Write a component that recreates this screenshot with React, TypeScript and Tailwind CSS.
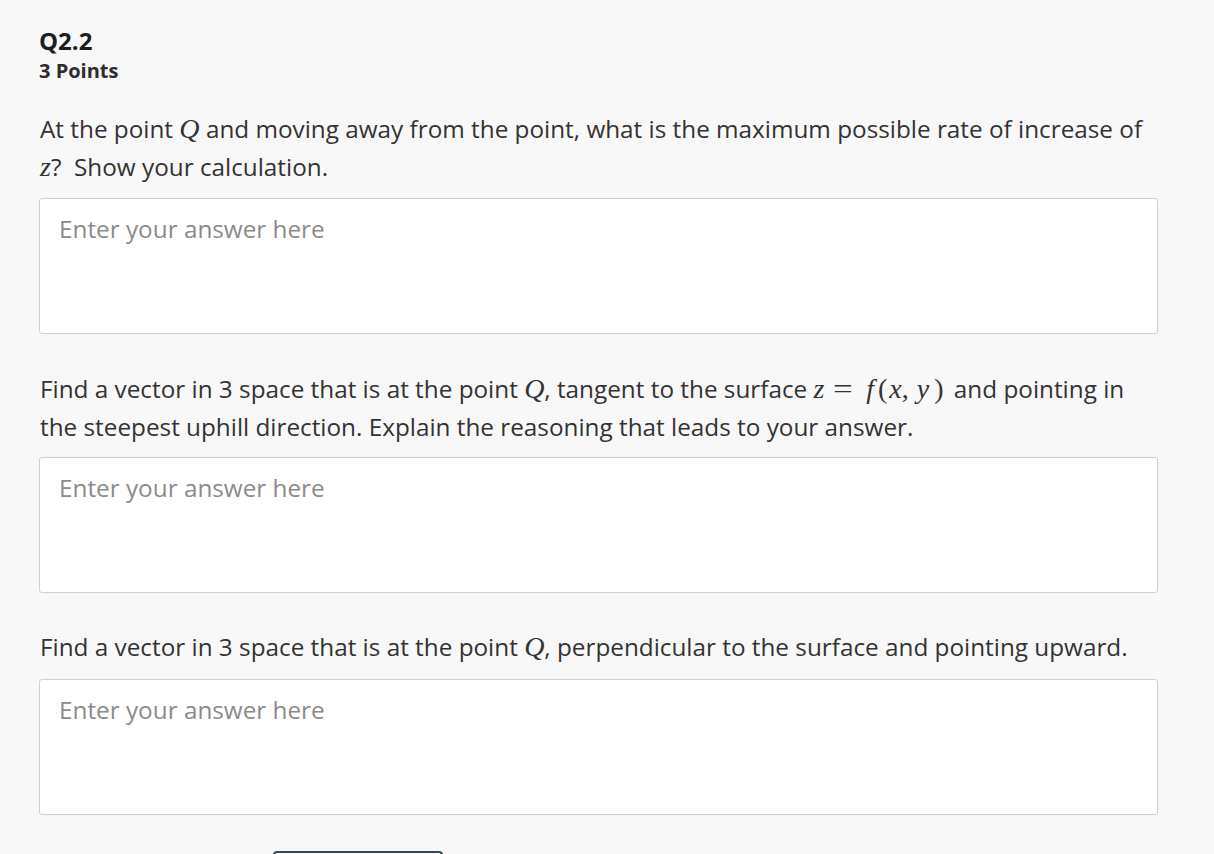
import React from "react";

const M: React.FC<{ children: React.ReactNode }> = ({ children }) => (
  <span className="font-['Liberation_Serif',serif] italic text-[28px] leading-none">
    {children}
  </span>
);

const Answer: React.FC = () => (
  <textarea
    placeholder="Enter your answer here"
    className="block w-full h-[136px] resize-none rounded-[3px] border border-[#cfcfcf] bg-white px-[19px] py-[14px] text-[24.3px] leading-[32px] text-[#333] placeholder:text-[#8b8b8b] outline-none"
  />
);

export default function App() {
  return (
    <div
      className="h-[854px] bg-[#f8f8f8] text-[#333] overflow-hidden"
      style={{ fontFamily: '"Open Sans", "Noto Sans", sans-serif' }}
    >
      <div className="w-[1119px] ml-[39px] pt-[25px]">
        <h2 className="text-[24px] font-bold leading-[32px] text-[#1e1e1e]">Q2.2</h2>
        <div className="text-[20px] font-bold leading-[28px] text-[#2d2d2d]">3 Points</div>

        <p className="mt-[25px] text-[24.3px] leading-[38px] pl-[1px]">
          At the point <M>Q</M> and moving away from the point, what is the maximum possible rate of increase of{" "}
          <M>z</M>?&nbsp; Show your calculation.
        </p>
        <div className="mt-[12px]">
          <Answer />
        </div>

        <p className="mt-[36px] text-[24.3px] leading-[38px] pl-[1px]">
          Find a vector in 3 space that is at the point <M>Q</M>, tangent to the surface{" "}
          <span className="font-['Liberation_Serif',serif] text-[28px] leading-none whitespace-nowrap mr-[4px]">
            <i>z</i>
            <span className="inline-block ml-[11px] mr-[15px] scale-x-125">=</span>
            <i>f</i>
            <span className="ml-[4px]">(</span>
            <i className="ml-[2px]">x</i>,<i className="ml-[8px]">y</i>
            <span className="ml-[5px]">)</span>
          </span>{" "}
          and pointing in the steepest uphill direction. Explain the reasoning that leads to your answer.
        </p>
        <div className="mt-[11px]">
          <Answer />
        </div>

        <p className="mt-[35px] text-[24.3px] leading-[38px] pl-[1px]">
          Find a vector in 3 space that is at the point <M>Q</M>, perpendicular to the surface and pointing upward.
        </p>
        <div className="mt-[13px]">
          <Answer />
        </div>

        <div className="mt-[36px] ml-[234px] w-[170px] h-[40px] rounded-[4px] border-2 border-[#2f4a52] bg-white" />
      </div>
    </div>
  );
}
